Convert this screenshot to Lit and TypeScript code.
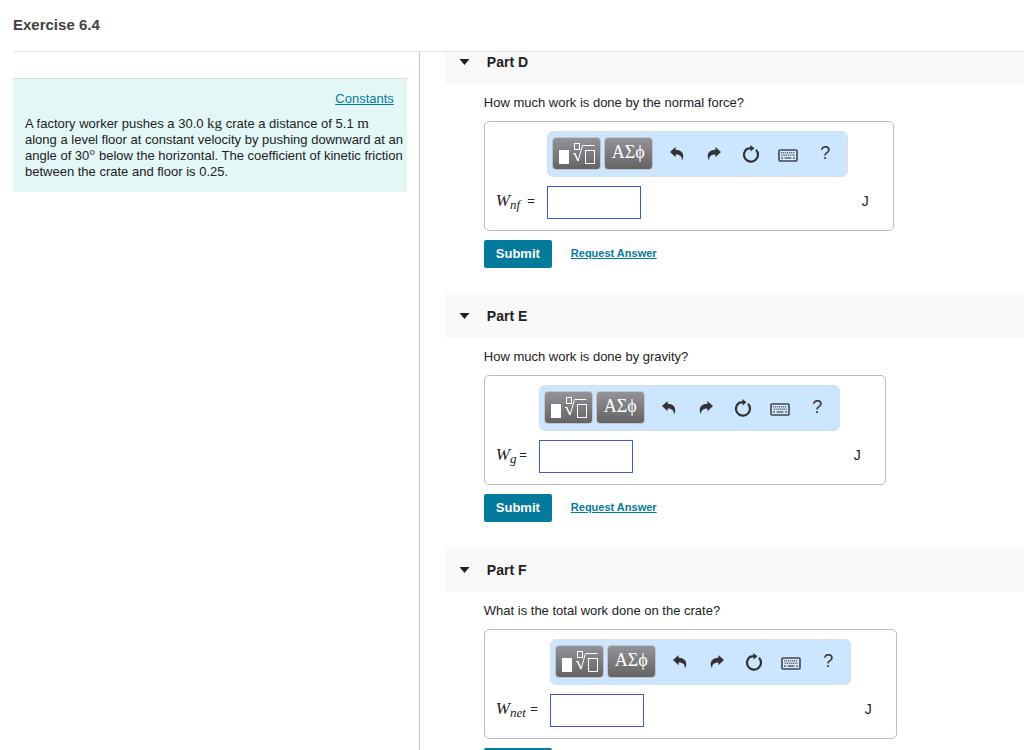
import { LitElement, html, css, svg } from "lit";
import { customElement, property } from "lit/decorators.js";

interface Part {
  id: string;
  question: string;
  sub: string;
  labelWidth: number;
}

const PARTS: Part[] = [
  { id: "D", question: "How much work is done by the normal force?", sub: "nf", labelWidth: 51 },
  { id: "E", question: "How much work is done by gravity?", sub: "g", labelWidth: 43 },
  { id: "F", question: "What is the total work done on the crate?", sub: "net", labelWidth: 54 },
];

const curvedArrow = svg`<path fill="#333" d="M0 5 5.600 0v2.700C10.500 2.700 13.800 5.500 13.200 10.200 13 11.500 12.500 12.500 11.800 13.500 12.200 9.800 10.300 7.600 5.600 7.600v2.600z"/>`;

@customElement("answer-toolbar")
export class AnswerToolbar extends LitElement {
  static styles = css`
    :host {
      display: flex;
      align-items: center;
      box-sizing: border-box;
      width: 301px;
      height: 46px;
      padding: 0 0 1px 4px;
      border: 1px solid #d8dfe6;
      border-radius: 6px;
      background: #cce6ff;
    }
    button {
      display: flex;
      align-items: center;
      justify-content: center;
      box-sizing: border-box;
      margin: 0;
      padding: 0;
      border: 0;
      background: none;
      color: #333;
      font: 18px "Liberation Sans", Arial, sans-serif;
    }
    .palette {
      width: 49px;
      height: 33px;
      margin-right: 3px;
      border: 1px solid #c4c4c8;
      border-radius: 4px;
      background: linear-gradient(#94929a, #646464);
      color: #fff;
    }
    .greek {
      font: 18px "Liberation Serif", "Times New Roman", serif;
      margin-right: 6px;
      padding-bottom: 2px;
    }
    .tool {
      width: 37px;
      height: 32px;
    }
    svg {
      display: block;
    }
  `;

  render() {
    return html`
      <button class="palette" aria-label="Templates">
        <svg width="38" height="22" viewBox="0 0 38 22">
          <rect x="2" y="7" width="10" height="14" fill="#fff" />
          <g fill="none" stroke="#fff">
            <rect x="17.500" y="0.500" width="5" height="6" />
            <path d="M16 10.500h2" />
            <path stroke-width="1.600" d="m17.500 10 3.500 8" />
            <path d="m21 18 4.500-15.500h12" />
            <rect x="28.500" y="7.500" width="9" height="13" />
          </g>
        </svg>
      </button>
      <button class="palette greek" aria-label="Symbols">ΑΣϕ</button>
      <button class="tool" aria-label="Undo">
        <svg width="14" height="14" viewBox="0 0 14 14">${curvedArrow}</svg>
      </button>
      <button class="tool" aria-label="Redo">
        <svg width="14" height="14" viewBox="0 0 14 14">
          <g transform="matrix(-1 0 0 1 14 0)">${curvedArrow}</g>
        </svg>
      </button>
      <button class="tool" aria-label="Reset">
        <svg width="18" height="18" viewBox="0 0 18 18">
          <path fill="none" stroke="#333" stroke-width="2.200" d="M14 4.800A7 7 0 1 1 5.200 3.800L9 3" />
          <path fill="#333" d="M8.200 0 12.500 3.200 8.600 6.600z" />
        </svg>
      </button>
      <button class="tool" aria-label="Keyboard">
        <svg width="20" height="18" viewBox="0 0 20 18">
          <rect x="1" y="5" width="18" height="11" rx="1" fill="#dcebfa" stroke="#3c4654" stroke-width="1.600" />
          <g stroke="#5a6676" stroke-width="1.500" fill="none">
            <path stroke-dasharray="1.200 .8" d="M3 7.800h14" />
            <path stroke-dasharray="1.200 .8" d="M3.600 10.200h13" />
            <path d="M3 13.100h2M6.500 13.100h7M15 13.100h2" />
          </g>
        </svg>
      </button>
      <button class="tool" aria-label="Help">?</button>
    `;
  }
}

@customElement("exercise-part")
export class ExercisePart extends LitElement {
  @property({ attribute: false }) part!: Part;

  static styles = css`
    :host {
      display: block;
      padding-bottom: 25px;
    }
    .head {
      display: flex;
      align-items: center;
      height: 45px;
      padding-left: 14px;
      background: #f9f9f9;
    }
    .toggle {
      display: flex;
      align-items: center;
      gap: 17px;
      margin: 0;
      padding: 0;
      border: 0;
      background: none;
      color: #222;
      font: bold 14px/20px "Liberation Sans", Arial, sans-serif;
    }
    .body {
      padding-left: 39px;
    }
    .question {
      margin: 0;
      padding: 11px 0 10px;
      font-size: 13px;
      line-height: 16px;
    }
    .answer {
      display: inline-grid;
      grid-template-columns: auto auto auto;
      align-items: center;
      row-gap: 9px;
      box-sizing: border-box;
      height: 110px;
      padding: 9px 0 12px 11px;
      border: 1px solid #bbb;
      border-radius: 5px;
      vertical-align: top;
    }
    .tools {
      grid-column: 2;
    }
    .label {
      grid-row: 2;
      display: flex;
      justify-content: space-between;
      box-sizing: border-box;
      padding: 0 12px 4px 0;
      font-size: 13px;
      line-height: 20px;
      white-space: nowrap;
    }
    .math {
      font: italic 17px/20px "Liberation Serif", "Times New Roman", serif;
    }
    .math sub {
      font-size: 13px;
      line-height: 0;
      vertical-align: -3px;
    }
    .value {
      grid-row: 2;
      box-sizing: border-box;
      width: 94px;
      height: 33px;
      margin: 0;
      padding: 0 6px;
      border: 1px solid #3d5bd0;
      border-radius: 0;
      outline: 0;
      background: #fff;
      font-size: 16px;
    }
    .unit {
      grid-row: 2;
      grid-column: 3;
      width: 31px;
      padding: 0 0 4px 14px;
      font-size: 14px;
      line-height: 20px;
    }
    .actions {
      display: flex;
      align-items: center;
      gap: 19px;
      margin-top: 9px;
    }
    .submit {
      box-sizing: border-box;
      width: 68px;
      height: 28px;
      margin: 0;
      padding: 0;
      border: 0;
      border-radius: 2px;
      background: #047a9c;
      color: #fff;
      font: bold 13px/20px "Liberation Sans", Arial, sans-serif;
    }
    .request {
      color: #047a9c;
      font-size: 11px;
      font-weight: bold;
      line-height: 16px;
      padding-bottom: 2px;
    }
  `;

  render() {
    const { id, question, sub, labelWidth } = this.part;
    return html`
      <div class="head">
        <button class="toggle" aria-expanded="true">
          <svg width="11" height="6" viewBox="0 0 11 6"><path fill="#222" d="M.5 0h10l-5 6z" /></svg>
          Part ${id}
        </button>
      </div>
      <div class="body">
        <p class="question">${question}</p>
        <div class="answer">
          <answer-toolbar class="tools"></answer-toolbar>
          <label class="label" for="value" style="width:${labelWidth}px"
            ><span class="math">W<sub>${sub}</sub></span
            ><span>=</span></label
          >
          <input class="value" id="value" type="text" />
          <span class="unit">J</span>
        </div>
        <div class="actions">
          <button class="submit">Submit</button>
          <a class="request" href="#">Request Answer</a>
        </div>
      </div>
    `;
  }
}

@customElement("app-root")
export class AppRoot extends LitElement {
  static styles = css`
    :host {
      display: flex;
      flex-direction: column;
      height: 100vh;
      overflow: hidden;
      background: #fff;
      color: #222;
      font-family: "Liberation Sans", Arial, sans-serif;
    }
    .top {
      flex: none;
      margin-left: 13px;
      padding: 15px 0 16px;
      border-bottom: 1px solid #e0e0e0;
    }
    .title {
      margin: 0;
      color: #424242;
      font-size: 15px;
      line-height: 20px;
    }
    .columns {
      flex: 1;
      display: grid;
      grid-template-columns: 41% 1fr;
      min-height: 0;
    }
    .side {
      padding: 26px 12px 0 13px;
      border-right: 1px solid #bcc6cd;
    }
    .problem {
      padding: 12px 0 12px 12px;
      border-top: 1px solid #d5dede;
      background: #e3f7f7;
      font-size: 13px;
    }
    .constants {
      display: block;
      width: fit-content;
      margin: 0 13px 9px auto;
      color: #047a9c;
      line-height: 16px;
    }
    .text {
      margin: 0;
      line-height: 16px;
    }
    .u {
      font: 15px/12px "Liberation Serif", "Times New Roman", serif;
    }
    .deg {
      font: 15px/12px "Liberation Serif", "Times New Roman", serif;
    }
    .parts {
      min-width: 0;
      overflow: hidden;
      padding-left: 25px;
    }
    .list {
      margin-top: -13px;
    }
  `;

  render() {
    return html`
      <header class="top"><h1 class="title">Exercise 6.4</h1></header>
      <main class="columns">
        <aside class="side">
          <div class="problem">
            <a class="constants" href="#">Constants</a>
            <p class="text">
              A factory worker pushes a 30.0 <span class="u">kg</span> crate a distance of 5.1
              <span class="u">m</span><br />along a level floor at constant velocity by pushing downward at an<br />angle
              of 30<span class="deg">°</span> below the horizontal. The coefficient of kinetic friction<br />between the
              crate and floor is 0.25.
            </p>
          </div>
        </aside>
        <section class="parts">
          <div class="list">${PARTS.map((p) => html`<exercise-part .part=${p}></exercise-part>`)}</div>
        </section>
      </main>
    `;
  }
}
